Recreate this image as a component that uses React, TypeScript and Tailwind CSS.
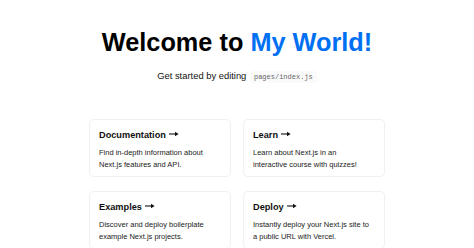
import React from "react";

const cards = [
  { title: "Documentation", desc: ["Find in-depth information about", "Next.js features and API."] },
  { title: "Learn", desc: ["Learn about Next.js in an", "interactive course with quizzes!"] },
  { title: "Examples", desc: ["Discover and deploy boilerplate", "example Next.js projects."] },
  { title: "Deploy", desc: ["Instantly deploy your Next.js site to", "a public URL with Vercel."] },
];

function Arrow() {
  return (
    <svg width="10" height="6" viewBox="0 0 10 6" className="inline-block ml-[3px] align-[1px]">
      <path d="M0 3H7" stroke="#111" strokeWidth="1.1" />
      <path d="M6 0.8L9.6 3L6 5.2Z" fill="#111" />
    </svg>
  );
}

export default function App() {
  return (
    <div
      className="w-[474px] h-[248px] overflow-hidden bg-white flex flex-col items-center pt-[28px]"
      style={{ fontFamily: '"Liberation Sans", Arial, sans-serif' }}
    >
      <h1 className="text-[25.3px] leading-[1.15] font-bold text-[#000]">
        Welcome to <span className="text-[#0070f3]">My World!</span>
      </h1>
      <p className="mt-[12px] text-[9.4px] leading-[14px] text-[#111]">
        Get started by editing{" "}
        <code
          className="ml-[1px] px-[4px] py-[2px] rounded-[3px] bg-[#fafafa] text-[7px] text-[#666]"
          style={{ fontFamily: '"Liberation Mono", "Courier New", monospace' }}
        >
          pages/index.js
        </code>
      </p>
      <div className="mt-[35px] grid grid-cols-[142px_142px] gap-x-[12px] gap-y-[14px]">
        {cards.map((c) => (
          <div
            key={c.title}
            className="border border-[#f0f0f0] rounded-[5px] px-[9px] pt-[9px] pb-[5px] text-[#111]"
          >
            <h3 className="text-[9.2px] leading-[12px] font-bold mb-[6px]">
              {c.title}
              <Arrow />
            </h3>
            <p className="text-[7.5px] leading-[12px] text-[#222]">
              {c.desc[0]}
              <br />
              {c.desc[1]}
            </p>
          </div>
        ))}
      </div>
    </div>
  );
}
